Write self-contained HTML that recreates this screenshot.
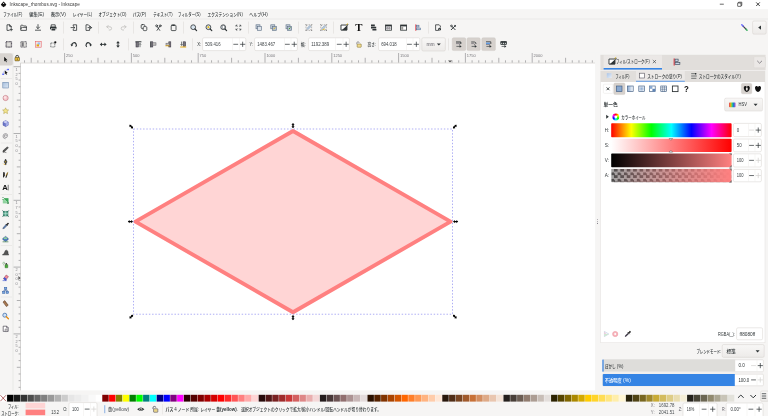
<!DOCTYPE html>
<html lang="ja"><head><meta charset="utf-8"><title>Inkscape_rhombus.svg - Inkscape</title>
<style>
html,body{margin:0;padding:0;width:768px;height:416px;overflow:hidden;background:#f6f5f4}
#r{filter:blur(0.8px);position:absolute;left:0;top:0;width:1920px;height:1040px;transform:scale(.4);transform-origin:0 0;background:#f6f5f4;overflow:hidden;font-family:"Liberation Sans","Noto Sans CJK JP",sans-serif;font-size:12px;font-weight:500;color:#2e3436}
#r div,#r span,#r svg{position:absolute;box-sizing:border-box}
#r svg{overflow:visible}
.t{white-space:nowrap;line-height:20px;height:20px;transform-origin:0 50%}
.t i{font-style:normal;font-size:1.18em}
.sp{background:#fff;border:1px solid #cdc7c2;border-radius:4px}
.bt{background:linear-gradient(#f8f7f6,#edebe9);border:1px solid #cdc7c2;border-radius:4px}
.tg{background:#d6d1cd;border:1px solid #cdc7c2;border-radius:4px}
</style></head><body><div id="r">
<div style="left:0.0px;top:0.0px;width:1920.0px;height:23.0px;background:#ffffff;"></div>
<span class="t" style="left:23.5px;top:2.38px;font-size:12px;color:#3c3c3c;transform:scaleX(0.964);">Inkscape_rhombus.svg - Inkscape</span>
<svg style="left:0.75px;top:3.0px;" width="16" height="16" viewBox="0 0 16 16"><path d="M8 1 L15 8 L12.5 10.5 L14 12 L11 12.5 L8 15 L5 12.5 L2 12 L3.5 10.5 L1 8 Z" fill="#111"/><path d="M6 6 L8 4 L10 6 L8 7Z" fill="#fff"/></svg>
<svg style="left:1790.0px;top:-1px" width="130" height="23" viewBox="0 0 130 23"><path d="M9.500 11.500h10" stroke="#000" stroke-width="1.500"/><rect x="54.500" y="8.500" width="8" height="8" fill="none" stroke="#000" stroke-width="1.400"/><path d="M56.500 8.500v-2h8v8h-2" fill="none" stroke="#000" stroke-width="1.400"/><path d="M100.500 7l9 9M109.500 7l-9 9" stroke="#000" stroke-width="1.800"/></svg>
<span class="t" style="left:7.75px;top:25.25px;font-size:12px;color:#2e3436;transform:scaleX(0.725);">ファイル<i>(F)</i></span>
<span class="t" style="left:72.5px;top:25.25px;font-size:12px;color:#2e3436;transform:scaleX(0.872);">編集<i>(E)</i></span>
<span class="t" style="left:126.5px;top:25.25px;font-size:12px;color:#2e3436;transform:scaleX(0.889);">表示<i>(V)</i></span>
<span class="t" style="left:181.88px;top:25.25px;font-size:12px;color:#2e3436;transform:scaleX(0.746);">レイヤー<i>(L)</i></span>
<span class="t" style="left:245.62px;top:25.25px;font-size:12px;color:#2e3436;transform:scaleX(0.761);">オブジェクト<i>(O)</i></span>
<span class="t" style="left:331.88px;top:25.25px;font-size:12px;color:#2e3436;transform:scaleX(0.785);">パス<i>(P)</i></span>
<span class="t" style="left:382.5px;top:25.25px;font-size:12px;color:#2e3436;transform:scaleX(0.739);">テキスト<i>(T)</i></span>
<span class="t" style="left:445.0px;top:25.25px;font-size:12px;color:#2e3436;transform:scaleX(0.720);">フィルター<i>(S)</i></span>
<span class="t" style="left:518.75px;top:25.25px;font-size:12px;color:#2e3436;transform:scaleX(0.766);">エクステンション<i>(N)</i></span>
<span class="t" style="left:622.5px;top:25.25px;font-size:12px;color:#2e3436;transform:scaleX(0.837);">ヘルプ<i>(H)</i></span>
<div style="left:0.0px;top:46.5px;width:1920.0px;height:1.0px;background:#dcd8d4;"></div>
<div style="left:51.5px;top:158.25px;width:1436.0px;height:817.5px;background:#ffffff;"></div>
<div style="left:33.5px;top:132.0px;width:1454.0px;height:26.25px;background:#f6f5f4;"></div>
<div style="left:33.5px;top:156.5px;width:1454.0px;height:1.75px;background:#bdbab6;"></div>
<div style="left:33.5px;top:132.0px;width:18.0px;height:843.75px;background:#f6f5f4;"></div>
<div style="left:50.5px;top:156.5px;width:1.5px;height:819.25px;background:#a5a3a0;"></div>
<div style="left:31.5px;top:132.0px;width:1.0px;height:843.75px;background:#d8d4d0;"></div>
<span class="t" style="left:165.0px;top:129.5px;font-size:10px;color:#77767b;">250</span>
<span class="t" style="left:332.0px;top:129.5px;font-size:10px;color:#77767b;">500</span>
<span class="t" style="left:499.0px;top:129.5px;font-size:10px;color:#77767b;">750</span>
<span class="t" style="left:666.0px;top:129.5px;font-size:10px;color:#77767b;">1000</span>
<span class="t" style="left:833.0px;top:129.5px;font-size:10px;color:#77767b;">1250</span>
<span class="t" style="left:1000.0px;top:129.5px;font-size:10px;color:#77767b;">1500</span>
<span class="t" style="left:1167.0px;top:129.5px;font-size:10px;color:#77767b;">1750</span>
<span class="t" style="left:1334.0px;top:129.5px;font-size:10px;color:#77767b;">2000</span>
<span class="t" style="left:38.75px;top:164.0px;font-size:9.5px;color:#858489;">1</span>
<span class="t" style="left:38.75px;top:175.5px;font-size:9.5px;color:#858489;">2</span>
<span class="t" style="left:38.75px;top:187.0px;font-size:9.5px;color:#858489;">5</span>
<span class="t" style="left:38.75px;top:198.5px;font-size:9.5px;color:#858489;">0</span>
<span class="t" style="left:38.75px;top:331.0px;font-size:9.5px;color:#858489;">1</span>
<span class="t" style="left:38.75px;top:342.5px;font-size:9.5px;color:#858489;">5</span>
<span class="t" style="left:38.75px;top:354.0px;font-size:9.5px;color:#858489;">0</span>
<span class="t" style="left:38.75px;top:365.5px;font-size:9.5px;color:#858489;">0</span>
<span class="t" style="left:38.75px;top:498.0px;font-size:9.5px;color:#858489;">1</span>
<span class="t" style="left:38.75px;top:509.5px;font-size:9.5px;color:#858489;">7</span>
<span class="t" style="left:38.75px;top:521.0px;font-size:9.5px;color:#858489;">5</span>
<span class="t" style="left:38.75px;top:532.5px;font-size:9.5px;color:#858489;">0</span>
<span class="t" style="left:38.75px;top:665.0px;font-size:9.5px;color:#858489;">2</span>
<span class="t" style="left:38.75px;top:676.5px;font-size:9.5px;color:#858489;">0</span>
<span class="t" style="left:38.75px;top:688.0px;font-size:9.5px;color:#858489;">0</span>
<span class="t" style="left:38.75px;top:699.5px;font-size:9.5px;color:#858489;">0</span>
<span class="t" style="left:38.75px;top:832.0px;font-size:9.5px;color:#858489;">2</span>
<span class="t" style="left:38.75px;top:843.5px;font-size:9.5px;color:#858489;">2</span>
<span class="t" style="left:38.75px;top:855.0px;font-size:9.5px;color:#858489;">5</span>
<span class="t" style="left:38.75px;top:866.5px;font-size:9.5px;color:#858489;">0</span>
<svg style="left:0;top:0" width="1920" height="1040" viewBox="0 0 1920 1040" stroke="#6b6a6f" stroke-width="1.25" fill="none"><path d="M61.3 150.75V156.5"/><path d="M78.0 144.5V156.5"/><path d="M94.7 150.75V156.5"/><path d="M111.4 150.75V156.5"/><path d="M128.1 150.75V156.5"/><path d="M144.8 150.75V156.5"/><path d="M161.5 132.5V156.5"/><path d="M178.2 150.75V156.5"/><path d="M194.9 150.75V156.5"/><path d="M211.6 150.75V156.5"/><path d="M228.3 150.75V156.5"/><path d="M245.0 144.5V156.5"/><path d="M261.7 150.75V156.5"/><path d="M278.4 150.75V156.5"/><path d="M295.1 150.75V156.5"/><path d="M311.8 150.75V156.5"/><path d="M328.5 132.5V156.5"/><path d="M345.2 150.75V156.5"/><path d="M361.9 150.75V156.5"/><path d="M378.6 150.75V156.5"/><path d="M395.3 150.75V156.5"/><path d="M412.0 144.5V156.5"/><path d="M428.7 150.75V156.5"/><path d="M445.4 150.75V156.5"/><path d="M462.1 150.75V156.5"/><path d="M478.8 150.75V156.5"/><path d="M495.5 132.5V156.5"/><path d="M512.2 150.75V156.5"/><path d="M528.9 150.75V156.5"/><path d="M545.6 150.75V156.5"/><path d="M562.3 150.75V156.5"/><path d="M579.0 144.5V156.5"/><path d="M595.7 150.75V156.5"/><path d="M612.4 150.75V156.5"/><path d="M629.1 150.75V156.5"/><path d="M645.8 150.75V156.5"/><path d="M662.5 132.5V156.5"/><path d="M679.2 150.75V156.5"/><path d="M695.9 150.75V156.5"/><path d="M712.6 150.75V156.5"/><path d="M729.3 150.75V156.5"/><path d="M746.0 144.5V156.5"/><path d="M762.7 150.75V156.5"/><path d="M779.4 150.75V156.5"/><path d="M796.1 150.75V156.5"/><path d="M812.8 150.75V156.5"/><path d="M829.5 132.5V156.5"/><path d="M846.2 150.75V156.5"/><path d="M862.9 150.75V156.5"/><path d="M879.6 150.75V156.5"/><path d="M896.3 150.75V156.5"/><path d="M913.0 144.5V156.5"/><path d="M929.7 150.75V156.5"/><path d="M946.4 150.75V156.5"/><path d="M963.1 150.75V156.5"/><path d="M979.8 150.75V156.5"/><path d="M996.5 132.5V156.5"/><path d="M1013.2 150.75V156.5"/><path d="M1029.9 150.75V156.5"/><path d="M1046.6 150.75V156.5"/><path d="M1063.3 150.75V156.5"/><path d="M1080.0 144.5V156.5"/><path d="M1096.7 150.75V156.5"/><path d="M1113.4 150.75V156.5"/><path d="M1130.1 150.75V156.5"/><path d="M1146.8 150.75V156.5"/><path d="M1163.5 132.5V156.5"/><path d="M1180.2 150.75V156.5"/><path d="M1196.9 150.75V156.5"/><path d="M1213.6 150.75V156.5"/><path d="M1230.3 150.75V156.5"/><path d="M1247.0 144.5V156.5"/><path d="M1263.7 150.75V156.5"/><path d="M1280.4 150.75V156.5"/><path d="M1297.1 150.75V156.5"/><path d="M1313.8 150.75V156.5"/><path d="M1330.5 132.5V156.5"/><path d="M1347.2 150.75V156.5"/><path d="M1363.9 150.75V156.5"/><path d="M1380.6 150.75V156.5"/><path d="M1397.3 150.75V156.5"/><path d="M1414.0 144.5V156.5"/><path d="M1430.7 150.75V156.5"/><path d="M1447.4 150.75V156.5"/><path d="M1464.1 150.75V156.5"/><path d="M1480.8 150.75V156.5"/><path d="M34.0 166.75H51.0"/><path d="M46.5 183.45H51.0"/><path d="M46.5 200.15H51.0"/><path d="M46.5 216.85H51.0"/><path d="M46.5 233.55H51.0"/><path d="M42.0 250.25H51.0"/><path d="M46.5 266.95H51.0"/><path d="M46.5 283.65H51.0"/><path d="M46.5 300.35H51.0"/><path d="M46.5 317.05H51.0"/><path d="M34.0 333.75H51.0"/><path d="M46.5 350.45H51.0"/><path d="M46.5 367.15H51.0"/><path d="M46.5 383.85H51.0"/><path d="M46.5 400.55H51.0"/><path d="M42.0 417.25H51.0"/><path d="M46.5 433.95H51.0"/><path d="M46.5 450.65H51.0"/><path d="M46.5 467.35H51.0"/><path d="M46.5 484.05H51.0"/><path d="M34.0 500.75H51.0"/><path d="M46.5 517.45H51.0"/><path d="M46.5 534.15H51.0"/><path d="M46.5 550.85H51.0"/><path d="M46.5 567.55H51.0"/><path d="M42.0 584.25H51.0"/><path d="M46.5 600.95H51.0"/><path d="M46.5 617.65H51.0"/><path d="M46.5 634.35H51.0"/><path d="M46.5 651.05H51.0"/><path d="M34.0 667.75H51.0"/><path d="M46.5 684.45H51.0"/><path d="M46.5 701.15H51.0"/><path d="M46.5 717.85H51.0"/><path d="M46.5 734.55H51.0"/><path d="M42.0 751.25H51.0"/><path d="M46.5 767.95H51.0"/><path d="M46.5 784.65H51.0"/><path d="M46.5 801.35H51.0"/><path d="M46.5 818.05H51.0"/><path d="M34.0 834.75H51.0"/><path d="M46.5 851.45H51.0"/><path d="M46.5 868.15H51.0"/><path d="M46.5 884.85H51.0"/><path d="M46.5 901.55H51.0"/><path d="M42.0 918.25H51.0"/><path d="M46.5 934.95H51.0"/><path d="M46.5 951.65H51.0"/><path d="M46.5 968.35H51.0"/></svg>
<svg style="left:0;top:0" width="1920" height="1040" viewBox="0 0 1920 1040"><path d="M1120.0 151.0h10l-5 5.500z" fill="#555"/><path d="M46.0 689.75v10l5.500-5z" fill="#555"/></svg>
<svg style="left:0;top:0" width="1920" height="1040" viewBox="0 0 1920 1040"><path d="M732.5 327.38 L1126.38 554.05 L732.5 780.75 L338.62 554.05Z" fill="#ffd5d5" stroke="#ff8080" stroke-width="9.75" stroke-linejoin="round"/><rect x="333.75" y="322.5" width="797.5" height="463.12" fill="none" stroke="#a3a3f4" stroke-width="2.2" stroke-dasharray="3.6 4.4"/><g transform="translate(328.0 316.5) rotate(45)"><path d="M-6.500 0L-2 -4V-1.700H2V-4L6.500 0L2 4V1.700H-2V4Z" fill="#000"/></g><g transform="translate(1137.0 316.5) rotate(-45)"><path d="M-6.500 0L-2 -4V-1.700H2V-4L6.500 0L2 4V1.700H-2V4Z" fill="#000"/></g><g transform="translate(328.25 791.5) rotate(-45)"><path d="M-6.500 0L-2 -4V-1.700H2V-4L6.500 0L2 4V1.700H-2V4Z" fill="#000"/></g><g transform="translate(1137.0 791.5) rotate(45)"><path d="M-6.500 0L-2 -4V-1.700H2V-4L6.500 0L2 4V1.700H-2V4Z" fill="#000"/></g><g transform="translate(732.5 314.0) rotate(90)"><path d="M-6.500 0L-2 -4V-1.700H2V-4L6.500 0L2 4V1.700H-2V4Z" fill="#000"/></g><g transform="translate(732.5 794.0) rotate(90)"><path d="M-6.500 0L-2 -4V-1.700H2V-4L6.500 0L2 4V1.700H-2V4Z" fill="#000"/></g><g transform="translate(326.0 554.05) rotate(0)"><path d="M-6.500 0L-2 -4V-1.700H2V-4L6.500 0L2 4V1.700H-2V4Z" fill="#000"/></g><g transform="translate(1139.0 554.05) rotate(0)"><path d="M-6.500 0L-2 -4V-1.700H2V-4L6.500 0L2 4V1.700H-2V4Z" fill="#000"/></g></svg>
<div style="left:1487.5px;top:132.0px;width:13.5px;height:845.5px;background:#f6f5f4;"></div>
<div style="left:1492.88px;top:547.62px;width:2.25px;height:2.25px;background:#3d3846;border-radius:50%"></div>
<div style="left:1492.88px;top:552.5px;width:2.25px;height:2.25px;background:#3d3846;border-radius:50%"></div>
<div style="left:1492.88px;top:557.38px;width:2.25px;height:2.25px;background:#3d3846;border-radius:50%"></div>
<div style="left:158.88px;top:53.75px;width:1.0px;height:30.0px;background:#d5d0cc;"></div>
<div style="left:245.25px;top:53.75px;width:1.0px;height:30.0px;background:#d5d0cc;"></div>
<div style="left:333.25px;top:53.75px;width:1.0px;height:30.0px;background:#d5d0cc;"></div>
<div style="left:458.25px;top:53.75px;width:1.0px;height:30.0px;background:#d5d0cc;"></div>
<div style="left:620.5px;top:53.75px;width:1.0px;height:30.0px;background:#d5d0cc;"></div>
<div style="left:745.75px;top:53.75px;width:1.0px;height:30.0px;background:#d5d0cc;"></div>
<div style="left:833.25px;top:53.75px;width:1.0px;height:30.0px;background:#d5d0cc;"></div>
<div style="left:1070.5px;top:53.75px;width:1.0px;height:30.0px;background:#d5d0cc;"></div>
<div style="left:158.88px;top:96.25px;width:1.0px;height:30.0px;background:#d5d0cc;"></div>
<div style="left:321.38px;top:96.25px;width:1.0px;height:30.0px;background:#d5d0cc;"></div>
<div style="left:481.38px;top:96.25px;width:1.0px;height:30.0px;background:#d5d0cc;"></div>
<div style="left:1121.0px;top:96.25px;width:1.0px;height:30.0px;background:#d5d0cc;"></div>
<svg style="left:12.5px;top:59.0px;" width="20" height="20" viewBox="0 0 20 20"><path d="M10 17H4.500V3H11L15 7V10" fill="none" stroke="#2e3436" stroke-width="2" stroke-linejoin="round" stroke-linecap="round"/><path d="M11 3V7H15" fill="none" stroke="#2e3436" stroke-width="2" stroke-linejoin="round" stroke-linecap="round"/><path d="M15 12v6M12 15h6" fill="none" stroke="#2e3436" stroke-width="2" stroke-linejoin="round" stroke-linecap="round"/></svg>
<svg style="left:48.75px;top:59.0px;" width="20" height="20" viewBox="0 0 20 20"><path d="M3 16V5.500Q3 4 4.500 4H8L10 6H15.500Q17 6 17 7.500V16Z" fill="none" stroke="#2e3436" stroke-width="2" stroke-linejoin="round" stroke-linecap="round"/><path d="M3 13Q3 9.500 7 9.500H17" fill="none" stroke="#2e3436" stroke-width="2" stroke-linejoin="round" stroke-linecap="round"/></svg>
<svg style="left:85.0px;top:59.0px;" width="20" height="20" viewBox="0 0 20 20"><path d="M10 2.500V12M6 8.500L10 12.500L14 8.500M3.500 16.500H16.500" fill="none" stroke="#2e3436" stroke-width="2" stroke-linejoin="round" stroke-linecap="round"/></svg>
<svg style="left:122.5px;top:59.0px;" width="20" height="20" viewBox="0 0 20 20"><path d="M5 7V3H15V7" fill="none" stroke="#2e3436" stroke-width="2" stroke-linejoin="round" stroke-linecap="round"/><rect x="2" y="7" width="16" height="8" rx="2" fill="#2e3436"/><rect x="5" y="12" width="10" height="6" fill="#2e3436" stroke="#f6f5f4" stroke-width="1"/></svg>
<svg style="left:175.0px;top:59.0px;" width="20" height="20" viewBox="0 0 20 20"><path d="M8 5V3H16.500V17H8V15" fill="none" stroke="#2e3436" stroke-width="2" stroke-linejoin="round" stroke-linecap="round"/><path d="M2.500 10H11.500M8.500 6.500L12 10L8.500 13.500" fill="none" stroke="#2e3436" stroke-width="2" stroke-linejoin="round" stroke-linecap="round"/></svg>
<svg style="left:211.25px;top:59.0px;" width="20" height="20" viewBox="0 0 20 20"><path d="M13 12.500V17H4V3H10L13 6V7.500" fill="none" stroke="#2e3436" stroke-width="2" stroke-linejoin="round" stroke-linecap="round"/><path d="M9 10H17.500M14.500 6.500L18 10L14.500 13.500" fill="none" stroke="#2e3436" stroke-width="2" stroke-linejoin="round" stroke-linecap="round"/></svg>
<svg style="left:262.5px;top:59.0px;" width="20" height="20" viewBox="0 0 20 20"><path d="M4 8H12Q16 8 16 12T12 16H10M7.500 4.500L4 8L7.500 11.500" fill="none" stroke="#c0bfbc" stroke-width="2" stroke-linejoin="round" stroke-linecap="round"/></svg>
<svg style="left:298.75px;top:59.0px;" width="20" height="20" viewBox="0 0 20 20"><path d="M16 8H8Q4 8 4 12T8 16H10M12.500 4.500L16 8L12.500 11.500" fill="none" stroke="#c0bfbc" stroke-width="2" stroke-linejoin="round" stroke-linecap="round"/></svg>
<svg style="left:350.0px;top:59.0px;" width="20" height="20" viewBox="0 0 20 20"><rect x="3" y="2.500" width="9" height="10" rx="2.500" fill="none" stroke="#2e3436" stroke-width="2" stroke-linejoin="round" stroke-linecap="round"/><rect x="8" y="7.500" width="9" height="10" rx="2.500" fill="#f6f5f4" stroke="#2e3436" stroke-width="2"/></svg>
<svg style="left:386.25px;top:59.0px;" width="20" height="20" viewBox="0 0 20 20"><circle cx="5.500" cy="5.500" r="2.300" fill="none" stroke="#2e3436" stroke-width="2" stroke-linejoin="round" stroke-linecap="round"/><circle cx="14.500" cy="5.500" r="2.300" fill="none" stroke="#2e3436" stroke-width="2" stroke-linejoin="round" stroke-linecap="round"/><path d="M7 7.500L13.500 17M13 7.500L6.500 17" fill="none" stroke="#2e3436" stroke-width="2" stroke-linejoin="round" stroke-linecap="round"/></svg>
<svg style="left:423.75px;top:59.0px;" width="20" height="20" viewBox="0 0 20 20"><rect x="4" y="4" width="12" height="13.500" rx="2" fill="none" stroke="#2e3436" stroke-width="2" stroke-linejoin="round" stroke-linecap="round"/><rect x="7" y="2" width="6" height="4" rx="1" fill="#2e3436"/></svg>
<svg style="left:474.38px;top:59.0px;" width="20" height="20" viewBox="0 0 20 20"><circle cx="9" cy="9" r="6" fill="#d8e4ee" stroke="#2e3436" stroke-width="2"/><path d="M13.500 13.500L17.500 17.500" stroke="#2e3436" stroke-width="3" stroke-linecap="round"/></svg>
<svg style="left:511.5px;top:59.0px;" width="20" height="20" viewBox="0 0 20 20"><circle cx="9" cy="9" r="6" fill="#d8e4ee" stroke="#2e3436" stroke-width="2"/><path d="M6 8L10 6L12 10L8 12Z" fill="#e9b913"/><path d="M13.500 13.500L17.500 17.500" stroke="#2e3436" stroke-width="3" stroke-linecap="round"/></svg>
<svg style="left:549.0px;top:59.0px;" width="20" height="20" viewBox="0 0 20 20"><circle cx="9" cy="9" r="6" fill="#d8e4ee" stroke="#2e3436" stroke-width="2"/><rect x="7" y="5.500" width="4.500" height="7" fill="#fff" stroke="#555"/><path d="M13.500 13.500L17.500 17.500" stroke="#2e3436" stroke-width="3" stroke-linecap="round"/></svg>
<svg style="left:586.0px;top:59.0px;" width="20" height="20" viewBox="0 0 20 20"><path d="M4 7.500V4H7.500M12.500 4H16V7.500M16 12.500V16H12.500M7.500 16H4V12.500" fill="none" stroke="#2e3436" stroke-width="1.700"/><path d="M4 4L8 8M16 4L12 8M4 16L8 12M16 16L12 12" stroke="#2e3436" stroke-width="1.300"/></svg>
<svg style="left:636.5px;top:59.0px;" width="20" height="20" viewBox="0 0 20 20"><rect x="3" y="3" width="10" height="10" fill="#c3ccd6" stroke="#5d6f85" stroke-width="1.500"/><rect x="7" y="7" width="10" height="10" fill="#dde3ea" stroke="#5d6f85" stroke-width="1.500"/></svg>
<svg style="left:674.0px;top:59.0px;" width="20" height="20" viewBox="0 0 20 20"><rect x="3" y="3" width="10" height="10" fill="#c3ccd6" stroke="#5d6f85" stroke-width="1.500"/><rect x="7" y="7" width="10" height="10" fill="#b3c0ce" stroke="#5d6f85" stroke-width="1.500"/><path d="M10 14L14 10" stroke="#e9b913" stroke-width="2.500"/></svg>
<svg style="left:711.5px;top:59.0px;" width="20" height="20" viewBox="0 0 20 20"><rect x="3" y="3" width="10" height="10" fill="#c3ccd6" stroke="#5d6f85" stroke-width="1.500"/><rect x="7" y="7" width="10" height="10" fill="#b3c0ce" stroke="#5d6f85" stroke-width="1.500"/><path d="M10 14L14 10" stroke="#4c9a2a" stroke-width="2.500"/></svg>
<svg style="left:762.25px;top:59.0px;" width="20" height="20" viewBox="0 0 20 20"><rect x="3" y="3" width="14" height="14" fill="none" stroke="#555" stroke-width="1.200" stroke-dasharray="2 2"/><path d="M5 12L12 5L15 8L8 15Z" fill="#b5c9dd" stroke="#6d8bad"/><path d="M2 2l3 3M18 2l-3 3M2 18l3-3M18 18l-3-3" stroke="#333" stroke-width="1.500"/></svg>
<svg style="left:798.75px;top:59.0px;" width="20" height="20" viewBox="0 0 20 20"><rect x="3" y="3" width="14" height="14" fill="none" stroke="#555" stroke-width="1.200" stroke-dasharray="2 2"/><path d="M5 12L12 5L15 8L8 15Z" fill="#b5c9dd" stroke="#6d8bad"/><path d="M6 14L14 12L11 16Z" fill="#e9b913"/><path d="M2 2l3 3M18 2l-3 3M2 18l3-3M18 18l-3-3" stroke="#333" stroke-width="1.500"/></svg>
<svg style="left:848.5px;top:57.5px;" width="23" height="23" viewBox="0 0 20 20"><path d="M3 4H15L17 2L18 3L16 6V15H3Z" fill="#fff" stroke="#2e3436" stroke-width="2" stroke-linejoin="round"/><path d="M4 16L16 5V15.500H4Z" fill="#2e3436"/><path d="M15 3l3-2" stroke="#e9b913" stroke-width="2"/></svg>
<svg style="left:886.5px;top:59.0px;" width="20" height="20" viewBox="0 0 20 20"><text x="10" y="19.500" font-family="Liberation Serif,serif" font-weight="bold" font-size="27" text-anchor="middle" fill="#111">T</text></svg>
<svg style="left:923.75px;top:59.0px;" width="20" height="20" viewBox="0 0 20 20"><path d="M3.500 4.500H13M3.500 10H16.500M7 15.500H17" stroke="#2e3436" stroke-width="3.900"/></svg>
<svg style="left:961.25px;top:59.0px;" width="20" height="20" viewBox="0 0 20 20"><rect x="2.500" y="3.500" width="15" height="13" fill="#fff" stroke="#2e3436" stroke-width="2"/><rect x="2.500" y="3.500" width="15" height="3.500" fill="#2e3436"/><path d="M5.500 9.500H9V13.500H5.500ZM11 9.500H14.500V13.500H11Z" fill="#deddda" stroke="#3d3846"/></svg>
<svg style="left:998.5px;top:59.0px;" width="20" height="20" viewBox="0 0 20 20"><rect x="2.500" y="3.500" width="15" height="13" fill="#fff" stroke="#2e3436" stroke-width="2"/><rect x="2.500" y="3.500" width="15" height="3.500" fill="#2e3436"/><rect x="4" y="8" width="5" height="7.500" fill="#9a9996"/></svg>
<svg style="left:1035.0px;top:59.0px;" width="20" height="20" viewBox="0 0 20 20"><path d="M4.500 2V18" stroke="#e01b24" stroke-width="2"/><rect x="6.500" y="4" width="6" height="4.500" fill="#c4d3e3" stroke="#46648a" stroke-width="1.300"/><rect x="6.500" y="11" width="10" height="4.500" fill="#c4d3e3" stroke="#46648a" stroke-width="1.300"/></svg>
<svg style="left:1085.25px;top:59.0px;" width="20" height="20" viewBox="0 0 20 20"><path d="M11 17H4V3H13L16 6V9" fill="none" stroke="#2e3436" stroke-width="2" stroke-linejoin="round" stroke-linecap="round"/><circle cx="14" cy="14" r="3.500" fill="#2e3436"/><circle cx="14" cy="14" r="1.200" fill="#f6f5f4"/></svg>
<svg style="left:1122.5px;top:59.0px;" width="20" height="20" viewBox="0 0 20 20"><g transform="translate(10 10) scale(.82) translate(-10 -10)"><path d="M3.500 4L16 16.500M16.500 4L4 16.500" stroke="#2e3436" stroke-width="2.800" stroke-linecap="round"/><circle cx="5" cy="5" r="2.800" fill="none" stroke="#2e3436" stroke-width="2"/><path d="M14 3l3.500 3.500" stroke="#2e3436" stroke-width="3.800"/></g></svg>
<svg style="left:11.5px;top:101.0px;" width="20" height="20" viewBox="0 0 20 20"><rect x="3" y="3" width="14" height="14" fill="#c0bfbc" stroke="#241f31" stroke-width="1.800" stroke-dasharray="2.500 1"/><rect x="6" y="6" width="8" height="8" fill="#deddda"/></svg>
<svg style="left:49.38px;top:101.0px;" width="20" height="20" viewBox="0 0 20 20"><rect x="3" y="3" width="14" height="14" fill="#c0bfbc" stroke="#5e5c64" stroke-width="1.800" stroke-dasharray="2.500 1"/><rect x="6" y="5" width="4" height="10" fill="#77767b"/><rect x="11" y="5" width="4" height="10" fill="#deddda"/></svg>
<svg style="left:86.25px;top:101.0px;" width="20" height="20" viewBox="0 0 20 20"><rect x="3" y="3" width="14" height="14" fill="#f1e4e4" stroke="#e8555c" stroke-width="1.300"/><circle cx="11" cy="8" r="3.200" fill="#99c1f1"/><rect x="5.500" y="10" width="6" height="5" fill="#e5a50a"/></svg>
<svg style="left:122.5px;top:101.0px;" width="20" height="20" viewBox="0 0 20 20"><rect x="4" y="6.500" width="10" height="10" fill="none" stroke="#2e3436" stroke-width="1.500" stroke-dasharray="3 1.200"/><circle cx="15.200" cy="4.800" r="2.800" fill="#111"/></svg>
<svg style="left:174.5px;top:101.0px;" width="20" height="20" viewBox="0 0 20 20"><path d="M4.500 13A5.800 5.800 0 1 1 14 16" fill="none" stroke="#2e3436" stroke-width="2.800"/><path d="M1 10.500L4.500 15.500L8 10.500Z" fill="#2e3436"/></svg>
<svg style="left:210.5px;top:101.0px;" width="20" height="20" viewBox="0 0 20 20"><path d="M15.500 13A5.800 5.800 0 1 0 6 16" fill="none" stroke="#2e3436" stroke-width="2.800"/><path d="M12 10.500L15.500 15.500L19 10.500Z" fill="#2e3436"/></svg>
<svg style="left:247.5px;top:101.0px;" width="20" height="20" viewBox="0 0 20 20"><path d="M5 10H15" stroke="#2e3436" stroke-width="2.400"/><path d="M1.500 10L7 5.500V14.500ZM18.500 10L13 5.500V14.500Z" fill="#2e3436"/></svg>
<svg style="left:285.0px;top:101.0px;" width="20" height="20" viewBox="0 0 20 20"><path d="M10 6V14" stroke="#2e3436" stroke-width="2.400"/><path d="M10 1.500L14.500 7H5.500ZM10 18.500L14.500 13H5.500Z" fill="#2e3436"/></svg>
<svg style="left:335.75px;top:101.0px;" width="20" height="20" viewBox="0 0 20 20"><path d="M2.500 3.500H17.500" stroke="#2e3436" stroke-width="2.600"/><rect x="4" y="5.500" width="6" height="11" fill="#77767b" stroke="#3d3846" stroke-width="1.400"/><path d="M14 17V8M11.500 10.500L14 7.500L16.500 10.500" stroke="#2e3436" stroke-width="1.600" fill="none"/></svg>
<svg style="left:373.25px;top:101.0px;" width="20" height="20" viewBox="0 0 20 20"><rect x="4" y="3.500" width="5" height="13" fill="#77767b" stroke="#3d3846" stroke-width="1.400"/><rect x="9" y="6" width="8" height="6" fill="#c0bfbc" stroke="#5e5c64" stroke-width="1.300"/><path d="M3.500 2.500V17.500" stroke="#2e3436" stroke-width="1.600"/></svg>
<svg style="left:410.75px;top:101.0px;" width="20" height="20" viewBox="0 0 20 20"><rect x="11" y="3.500" width="5" height="13" fill="#77767b" stroke="#3d3846" stroke-width="1.400"/><rect x="4" y="7" width="8" height="6" fill="#c0bfbc" stroke="#5e5c64" stroke-width="1.300"/><path d="M2.500 13.500H13" stroke="#e5a50a" stroke-width="2"/></svg>
<svg style="left:447.5px;top:101.0px;" width="20" height="20" viewBox="0 0 20 20"><rect x="10" y="3.500" width="6" height="11" fill="#77767b" stroke="#3d3846" stroke-width="1.400"/><path d="M6 3V12M3.500 9.500L6 12.500L8.500 9.500" stroke="#2e3436" stroke-width="1.600" fill="none"/><path d="M2.500 16.500H17.500" stroke="#e5a50a" stroke-width="2.400"/></svg>
<span class="t" style="left:492.5px;top:101.0px;font-size:12px;color:#2e3436;transform:scaleX(0.909);">X:</span>
<div class="sp" style="left:506.25px;top:94.25px;width:109.0px;height:33.0px"></div>
<div style="left:580.5px;top:95.25px;width:0.5px;height:31.0px;background:#ebe8e5;"></div>
<div style="left:597.75px;top:95.25px;width:0.5px;height:31.0px;background:#ebe8e5;"></div>
<svg style="left:0;top:0" width="1920" height="1040" viewBox="0 0 1920 1040"><path d="M583.38 110.75h12" stroke="#2e3436" stroke-width="1.800"/><path d="M600.12 110.75h13M606.62 104.25v13" stroke="#2e3436" stroke-width="1.800"/></svg>
<span class="t" style="left:513.25px;top:100.75px;font-size:13px;color:#3a3f42;transform:scaleX(0.819);">509.416</span>
<span class="t" style="left:624.0px;top:101.0px;font-size:12px;color:#2e3436;transform:scaleX(0.818);">Y:</span>
<div class="sp" style="left:635.5px;top:94.25px;width:108.75px;height:33.0px"></div>
<div style="left:709.5px;top:95.25px;width:0.5px;height:31.0px;background:#ebe8e5;"></div>
<div style="left:726.75px;top:95.25px;width:0.5px;height:31.0px;background:#ebe8e5;"></div>
<svg style="left:0;top:0" width="1920" height="1040" viewBox="0 0 1920 1040"><path d="M712.38 110.75h12" stroke="#2e3436" stroke-width="1.800"/><path d="M729.12 110.75h13M735.62 104.25v13" stroke="#2e3436" stroke-width="1.800"/></svg>
<span class="t" style="left:642.5px;top:100.75px;font-size:13px;color:#3a3f42;transform:scaleX(0.829);">1483.467</span>
<span class="t" style="left:752.0px;top:101.0px;font-size:12px;color:#2e3436;transform:scaleX(0.781);">幅<i>:</i></span>
<div class="sp" style="left:770.5px;top:94.25px;width:103.5px;height:33.0px"></div>
<div style="left:839.25px;top:95.25px;width:0.5px;height:31.0px;background:#ebe8e5;"></div>
<div style="left:856.5px;top:95.25px;width:0.5px;height:31.0px;background:#ebe8e5;"></div>
<svg style="left:0;top:0" width="1920" height="1040" viewBox="0 0 1920 1040"><path d="M842.12 110.75h12" stroke="#2e3436" stroke-width="1.800"/><path d="M858.88 110.75h13M865.38 104.25v13" stroke="#2e3436" stroke-width="1.800"/></svg>
<span class="t" style="left:777.5px;top:100.75px;font-size:13px;color:#3a3f42;transform:scaleX(0.844);">1192.389</span>
<span class="t" style="left:919.0px;top:101.0px;font-size:12px;color:#2e3436;transform:scaleX(0.768);">高さ<i>:</i></span>
<div class="sp" style="left:945.75px;top:94.25px;width:103.75px;height:33.0px"></div>
<div style="left:1014.75px;top:95.25px;width:0.5px;height:31.0px;background:#ebe8e5;"></div>
<div style="left:1032.0px;top:95.25px;width:0.5px;height:31.0px;background:#ebe8e5;"></div>
<svg style="left:0;top:0" width="1920" height="1040" viewBox="0 0 1920 1040"><path d="M1017.63 110.75h12" stroke="#2e3436" stroke-width="1.800"/><path d="M1034.38 110.75h13M1040.88 104.25v13" stroke="#2e3436" stroke-width="1.800"/></svg>
<span class="t" style="left:952.75px;top:100.75px;font-size:13px;color:#3a3f42;transform:scaleX(0.825);">694.018</span>
<svg style="left:887.0px;top:101.0px;" width="20" height="20" viewBox="0 0 20 20"><path d="M5 9.500V6.500Q5 3.500 8 3.500T11 6" fill="none" stroke="#77767b" stroke-width="1.800"/><rect x="6" y="9" width="10" height="8" rx="1" fill="#ecd27a" stroke="#6b5a1e" stroke-width="1.200"/><path d="M7 12H15M7 14.500H15" stroke="#fbefc0" stroke-width="1"/></svg>
<div class="bt" style="left:1054.0px;top:93.75px;width:60.0px;height:34.0px"></div>
<span class="t" style="left:1065.5px;top:101.0px;font-size:12px;color:#5e5c64;transform:scaleX(1.025);">mm</span>
<svg style="left:1086.5px;top:101.25px;" width="20" height="20" viewBox="0 0 20 20"><path d="M5 7.500H15L10 13Z" fill="#2e3436"/></svg>
<div class="tg" style="left:1129.75px;top:94.25px;width:35.0px;height:33.0px"></div>
<div class="tg" style="left:1167.25px;top:94.25px;width:33.5px;height:33.0px"></div>
<div class="tg" style="left:1203.5px;top:94.25px;width:35.0px;height:33.0px"></div>
<svg style="left:1137.25px;top:101.0px;" width="20" height="20" viewBox="0 0 20 20"><path d="M3 4H15V9" fill="none" stroke="#2e3436" stroke-width="2.400"/><path d="M3 8H12V12" fill="none" stroke="#5e5c64" stroke-width="1.600"/><path d="M4 15H13" stroke="#2e3436" stroke-width="1.600"/><path d="M12 11.500L17 15L12 18.500Z" fill="#2e3436"/></svg>
<svg style="left:1174.5px;top:101.0px;" width="20" height="20" viewBox="0 0 20 20"><path d="M3 4H11Q15 4 15 9" fill="none" stroke="#2e3436" stroke-width="2"/><path d="M3 8H9Q12 8 12 12" fill="none" stroke="#5e5c64" stroke-width="1.600"/><path d="M4 15H13" stroke="#2e3436" stroke-width="1.600"/><path d="M12 11.500L17 15L12 18.500Z" fill="#2e3436"/></svg>
<svg style="left:1212.0px;top:101.0px;" width="20" height="20" viewBox="0 0 20 20"><path d="M3 3.500H15V9" fill="none" stroke="#2e3436" stroke-width="2"/><rect x="3" y="5.500" width="10" height="4" fill="#62a0ea"/><path d="M3 10H12V13" fill="none" stroke="#5e5c64" stroke-width="1.600"/><path d="M4 15H13" stroke="#2e3436" stroke-width="1.600"/><path d="M12 11.500L17 15L12 18.500Z" fill="#2e3436"/></svg>
<svg style="left:1248.75px;top:101.0px;" width="20" height="20" viewBox="0 0 20 20"><path d="M3 3H17V10H3ZM7.500 3V10M12.500 3V10" fill="none" stroke="#2e3436" stroke-width="2.200"/><path d="M3 4.500H17" stroke="#2e3436" stroke-width="3"/><path d="M5 15H13" stroke="#2e3436" stroke-width="1.600"/><path d="M12 11.500L17 15L12 18.500Z" fill="#2e3436"/></svg>
<svg style="left:1850.5px;top:58.75px;" width="20" height="20" viewBox="0 0 20 20"><path d="M5.500 5L14.500 14.500" stroke="#3d3846" stroke-width="3"/><path d="M3.500 3L6.500 6" stroke="#6c6cff" stroke-width="4" stroke-linecap="round"/><path d="M14 14L16.500 16.500" stroke="#3fae62" stroke-width="4" stroke-linecap="round"/></svg>
<div class="bt" style="left:1880.5px;top:52.0px;width:35.0px;height:33.5px"></div>
<svg style="left:1889.0px;top:59.0px;" width="20" height="20" viewBox="0 0 20 20"><path d="M13.500 4.500V15.500L6.500 10Z" fill="#2e3436"/></svg>
<div style="left:0;top:132.5px;width:31.5px;height:31.5px;background:#d8d4d0;border-radius:0 5px 5px 0"></div>
<svg style="left:4.0px;top:138.5px;" width="20" height="20" viewBox="0 0 20 20"><path d="M6.500 3V15L9.300 12.300L11.300 16.500L13 15.700L11 11.600H14.800Z" fill="#111"/></svg>
<svg style="left:4.0px;top:170.29px;" width="20" height="20" viewBox="0 0 20 20"><path d="M3 16Q5 5 16 4" fill="none" stroke="#5b6cff" stroke-width="1.300" stroke-dasharray="2 1.500"/><path d="M8 6V16L10.500 13.500L12.500 17L14 16.300L12 12.800H15.500Z" fill="#111"/><rect x="2" y="14" width="3.500" height="3.500" fill="#3a4bff"/><rect x="14.500" y="2" width="3.500" height="3.500" fill="#3a4bff"/></svg>
<svg style="left:4.0px;top:203.32px;" width="20" height="20" viewBox="0 0 20 20"><defs><linearGradient id="tr1" x1="0" y1="0" x2="1" y2="1"><stop offset="0" stop-color="#a8c0de"/><stop offset="1" stop-color="#dbe6f2"/></linearGradient></defs><rect x="3" y="3" width="14" height="14" fill="url(#tr1)" stroke="#5d7da6" stroke-width="1.300"/></svg>
<svg style="left:4.0px;top:235.11px;" width="20" height="20" viewBox="0 0 20 20"><circle cx="10" cy="10" r="6.500" fill="#f7c9ce" stroke="#b5606c" stroke-width="1.300"/><circle cx="8.500" cy="8.500" r="3" fill="#fbe3e6"/></svg>
<svg style="left:4.0px;top:266.89px;" width="20" height="20" viewBox="0 0 20 20"><path d="M10 2.500L12.300 7.500L17.500 8L13.700 11.700L14.800 17L10 14.300L5.200 17L6.300 11.700L2.500 8L7.700 7.500Z" fill="#f3e58f" stroke="#a8953a" stroke-width="1.200"/></svg>
<svg style="left:4.0px;top:298.68px;" width="20" height="20" viewBox="0 0 20 20"><path d="M10 2.500L16.500 6V14L10 17.500L3.500 14V6Z" fill="#6e78cc" stroke="#3c4799" stroke-width="1.100"/><path d="M3.500 6L10 9.500L16.500 6M10 9.500V17.500" fill="none" stroke="#3c4799" stroke-width="1"/><path d="M10 2.500L16.500 6L10 9.500L3.500 6Z" fill="#c9cdf3"/><path d="M10 9.500L16.500 6V14L10 17.500Z" fill="#a3aae6"/></svg>
<svg style="left:4.0px;top:330.46px;" width="20" height="20" viewBox="0 0 20 20"><path d="M10 10Q12 10 12 8.500T9.500 7T6.500 10T10 14T14.800 9.500T10 4T3.500 10T10 17" fill="none" stroke="#77767b" stroke-width="1.600"/></svg>
<svg style="left:4.0px;top:363.5px;" width="20" height="20" viewBox="0 0 20 20"><path d="M3 15L5 11L14.500 3L17 5.500L8 14.500Z" fill="#555" stroke="#222" stroke-width="1"/><path d="M3 15L4.300 12.300L6.800 14.300Z" fill="#222"/><path d="M3 17.500Q8 15.500 12 17.500" fill="none" stroke="#222" stroke-width="1.200"/></svg>
<svg style="left:4.0px;top:395.28px;" width="20" height="20" viewBox="0 0 20 20"><path d="M10 2.500L13.500 9.500Q13.500 12 11.300 13V16.500H8.700V13Q6.500 12 6.500 9.500Z" fill="#444" stroke="#111" stroke-width="1"/><circle cx="10" cy="9.500" r="1.300" fill="#f5c211"/><path d="M4 14Q6 17.500 9 16" fill="none" stroke="#e5a50a" stroke-width="1.500"/></svg>
<svg style="left:4.0px;top:427.06px;" width="20" height="20" viewBox="0 0 20 20"><path d="M4 3L8 4V12.500L5 17H3.500Z" fill="#222"/><path d="M9.500 17.500Q10 8 16.500 2.500Q15 10 12 17.500Z" fill="#222"/><path d="M11 12L15.500 4" stroke="#e5a50a" stroke-width="1.500"/></svg>
<svg style="left:4.0px;top:458.85px;" width="20" height="20" viewBox="0 0 20 20"><text x="8.500" y="17" font-family="Liberation Sans,sans-serif" font-weight="bold" font-size="19" text-anchor="middle" fill="#111">A</text><path d="M16.500 3V17" stroke="#111" stroke-width="1.400"/></svg>
<svg style="left:4.0px;top:491.89px;" width="20" height="20" viewBox="0 0 20 20"><rect x="3" y="3.500" width="14" height="13" fill="#8fd19e"/><path d="M3 3.500H17V16.500Z" fill="#3fa85a"/><path d="M4 4.500L16 15.500" stroke="#e8fbe8" stroke-width="1.500"/><rect x="2" y="2.500" width="3.500" height="3.500" fill="#fff" stroke="#2d7a42"/><rect x="14.500" y="14" width="3.500" height="3.500" fill="#fff" stroke="#2d7a42"/></svg>
<svg style="left:4.0px;top:523.67px;" width="20" height="20" viewBox="0 0 20 20"><rect x="4" y="4" width="12" height="12" fill="#5aa88f" stroke="#2a6b5a" stroke-width="1.200"/><path d="M4 10H16M10 4V16" stroke="#cfeee4" stroke-width="1.200"/><path d="M2 2l4 4M18 2l-4 4M2 18l4-4M18 18l-4-4" stroke="#2a6b5a" stroke-width="1.800"/></svg>
<svg style="left:4.0px;top:555.46px;" width="20" height="20" viewBox="0 0 20 20"><path d="M3 17L4 13.500L11 6.500L13.500 9L6.500 16Z" fill="#5a7fb5" stroke="#26364d" stroke-width="1"/><path d="M10.500 5L15 9.500M12 6.500L15.500 2.500Q17.500 2.500 17.500 4.500L13.500 8Z" fill="#222" stroke="#222" stroke-width="1.600"/></svg>
<svg style="left:4.0px;top:587.24px;" width="20" height="20" viewBox="0 0 20 20"><path d="M3 9L10 4L16.500 9V12L10 16.500L3 12Z" fill="#4d7fc4" stroke="#24446e" stroke-width="1.200"/><ellipse cx="9.500" cy="8.500" rx="4.500" ry="2.300" fill="#8fd19e"/><path d="M2.500 17.500H17" stroke="#3a7a4d" stroke-width="1.800"/></svg>
<svg style="left:4.0px;top:620.28px;" width="20" height="20" viewBox="0 0 20 20"><path d="M2.500 16.500Q6 16.500 7.500 10.500T12.500 5.500T16 10.500T17.500 16.500Z" fill="#555" stroke="#222" stroke-width="1"/><path d="M2 17H18" stroke="#222" stroke-width="1.400"/></svg>
<svg style="left:4.0px;top:652.06px;" width="20" height="20" viewBox="0 0 20 20"><rect x="8.500" y="9" width="7" height="8.500" rx="1" fill="#4caa3c" stroke="#1f5c16" stroke-width="1"/><rect x="10" y="6" width="3.500" height="3" fill="#222"/><path d="M3 3l1.500 1.500M6 2.500l1 2M2.500 6.500l2 .800M6.500 6L8 7.500M3.500 10l1.500 0" stroke="#2e7d32" stroke-width="1.500"/></svg>
<svg style="left:4.0px;top:683.85px;" width="20" height="20" viewBox="0 0 20 20"><path d="M4.500 13L11.500 3.500L17 7.500L10 17Z" fill="#f28b9b" stroke="#8c2f3f" stroke-width="1.200"/><path d="M4.500 13L7.300 9.200L12.800 13.200L10 17Z" fill="#3a57d6"/><path d="M2.500 17.500H13" stroke="#3a57d6" stroke-width="1.600"/></svg>
<svg style="left:4.0px;top:715.63px;" width="20" height="20" viewBox="0 0 20 20"><rect x="7" y="2.500" width="6" height="5" fill="#7aa7e0" stroke="#2e5aa0" stroke-width="1.200"/><rect x="2.500" y="12.500" width="6" height="5" fill="#7aa7e0" stroke="#2e5aa0" stroke-width="1.200"/><rect x="11.500" y="12.500" width="6" height="5" fill="#7aa7e0" stroke="#2e5aa0" stroke-width="1.200"/><path d="M10 7.500V10M5.500 12.500V10H14.500V12.500" fill="none" stroke="#2e5aa0" stroke-width="1.400"/></svg>
<svg style="left:4.0px;top:748.66px;" width="20" height="20" viewBox="0 0 20 20"><path d="M3.500 6L8 2.500L16.500 14L12 17.500Z" fill="#b5835a" stroke="#4d2f1a" stroke-width="1.300"/><path d="M6.500 6.500l2-1.500M8.500 9l2-1.500M10.500 11.500l2-1.500M12.500 14l2-1.500" stroke="#4d2f1a" stroke-width="1"/></svg>
<svg style="left:4.0px;top:780.45px;" width="20" height="20" viewBox="0 0 20 20"><circle cx="8" cy="8" r="5" fill="#cfe2f7" stroke="#3465a4" stroke-width="1.800"/><path d="M12 12L17 17" stroke="#e5890a" stroke-width="3.200" stroke-linecap="round"/></svg>
<svg style="left:4.0px;top:812.24px;" width="20" height="20" viewBox="0 0 20 20"><path d="M4 3.500H13L16.500 7V16.500H4Z" fill="#fff" stroke="#3d3846" stroke-width="1.600"/><path d="M12.500 3.500V7.500H16.500" fill="none" stroke="#3d3846" stroke-width="1.400"/><path d="M9 10.500H14V17H9Z" fill="#deddda" stroke="#3d3846" stroke-width="1"/></svg>
<div style="left:1.5px;top:196.41px;width:28.5px;height:0.75px;background:#dcd8d4;"></div>
<div style="left:1.5px;top:356.58px;width:28.5px;height:0.75px;background:#dcd8d4;"></div>
<div style="left:1.5px;top:484.97px;width:28.5px;height:0.75px;background:#dcd8d4;"></div>
<div style="left:1.5px;top:613.37px;width:28.5px;height:0.75px;background:#dcd8d4;"></div>
<div style="left:1.5px;top:741.75px;width:28.5px;height:0.75px;background:#dcd8d4;"></div>
<svg style="left:32.5px;top:134.75px;" width="20" height="20" viewBox="0 0 20 20"><path d="M6.500 9V6.500Q6.500 3.500 10 3.500T13.500 6.500V9" fill="none" stroke="#2e3436" stroke-width="2.200"/><rect x="4.500" y="8.500" width="11" height="8.500" rx="1" fill="#f0b81a" stroke="#4a3a10" stroke-width="1.500"/><path d="M5.500 11.500H14.500M5.500 14H14.500" stroke="#fbe38a" stroke-width="1"/><rect x="9" y="11" width="2" height="3.500" fill="#4a3a10"/></svg>
<div style="left:1501.25px;top:137.0px;width:413.0px;height:38.0px;background:#e1dedb;"></div>
<div style="left:1509.0px;top:138.0px;width:146.0px;height:37.0px;background:#ebe8e6;"></div>
<div style="left:1509.0px;top:170.25px;width:146.0px;height:4.0px;background:#3584e4;"></div>
<svg style="left:1518.5px;top:143.25px;" width="23" height="23" viewBox="0 0 20 20"><path d="M3 4H15L17.500 1.500L18.500 2.500L16 6V15H3Z" fill="#fff" stroke="#2e3436" stroke-width="2" stroke-linejoin="round"/><path d="M4 16L16 5V15.500H4Z" fill="#2e3436"/><path d="M15.500 3l3-2.500" stroke="#e9b913" stroke-width="2"/></svg>
<span class="t" style="left:1540.0px;top:143.0px;font-size:12px;color:#2e3436;transform:scaleX(0.716);">フィル<i>/</i>ストローク<i>(F)</i></span>
<svg style="left:1626.0px;top:144.0px;" width="20" height="20" viewBox="0 0 20 20"><path d="M6 6L14 14M14 6L6 14" stroke="#2e3436" stroke-width="1.500"/></svg>
<svg style="left:1681.0px;top:143.75px;" width="22" height="22" viewBox="0 0 20 20"><path d="M4 2V18" stroke="#e01b24" stroke-width="2.200"/><rect x="6" y="3.500" width="7" height="5" fill="#c9d6e6" stroke="#3d4a5c" stroke-width="1.500"/><rect x="6" y="11" width="11" height="5" fill="#c9d6e6" stroke="#3d4a5c" stroke-width="1.500"/></svg>
<div style="left:1884.0px;top:140.75px;width:29.75px;height:29.0px;border-radius:4px;background:#ebe8e6;border:1px solid #dad6d2"></div>
<svg style="left:1889.25px;top:145.25px;" width="20" height="20" viewBox="0 0 20 20"><path d="M4 7L10 13L16 7" fill="none" stroke="#5e5c64" stroke-width="1.700"/></svg>
<div style="left:1501.25px;top:176.5px;width:411.25px;height:28.0px;background:#e1dedb;"></div>
<div style="left:1501.25px;top:175.0px;width:411.25px;height:2.0px;background:#efedeb;"></div>
<div style="left:1590.0px;top:177.0px;width:122.0px;height:27.5px;background:#ebe8e6;"></div>
<div style="left:1590.0px;top:201.5px;width:122.0px;height:2.5px;background:#3584e4;"></div>
<svg style="left:1513.25px;top:179.0px;" width="20" height="20" viewBox="0 0 20 20"><defs><linearGradient id="tf1" x1="0" y1="0" x2="1" y2="1"><stop offset="0" stop-color="#a9c3e6"/><stop offset="1" stop-color="#e6eef8"/></linearGradient></defs><rect x="4" y="4" width="12" height="12" fill="url(#tf1)"/></svg>
<span class="t" style="left:1539.25px;top:179.75px;font-size:12px;color:#2e3436;transform:scaleX(0.643);">フィル<i>(F)</i></span>
<svg style="left:1594.5px;top:178.75px;" width="20" height="20" viewBox="0 0 20 20"><rect x="4" y="4" width="12" height="12" fill="#fff" stroke="#5e5c64" stroke-width="1.600"/></svg>
<span class="t" style="left:1617.5px;top:179.75px;font-size:12px;color:#2e3436;transform:scaleX(0.756);">ストロークの塗り<i>(P)</i></span>
<svg style="left:1725.0px;top:179.75px;" width="20" height="20" viewBox="0 0 20 20"><path d="M3 4.250H16M3 10H17M3 15.750H16" stroke="#2e3436" stroke-width="1.600"/><path d="M12.500 2.500H15.500V6H12.500Z" fill="#2e3436"/></svg>
<span class="t" style="left:1747.25px;top:179.75px;font-size:12px;color:#2e3436;transform:scaleX(0.757);">ストロークのスタイル<i>(Y)</i></span>
<div style="left:1501.25px;top:204.5px;width:411.25px;height:652.0px;background:#ffffff;border:1px solid #dcd8d4;border-top:none"></div>
<div style="left:1507.5px;top:210.0px;width:25.0px;height:23.5px;background:#fff;border:1px solid #e4e1de;border-radius:3px"></div>
<svg style="left:1510.0px;top:211.5px;" width="20" height="20" viewBox="0 0 20 20"><path d="M6.500 6.500L13.500 13.500M13.500 6.500L6.500 13.500" stroke="#2e3436" stroke-width="2.200"/></svg>
<div class="tg" style="left:1534.0px;top:207.0px;width:28.5px;height:29.5px"></div>
<svg style="left:1538.25px;top:211.5px;" width="20" height="20" viewBox="0 0 20 20"><rect x="3" y="3" width="14" height="14" fill="#8aa9d0" stroke="#3d5a80" stroke-width="1.600"/></svg>
<svg style="left:1565.75px;top:211.5px;" width="20" height="20" viewBox="0 0 20 20"><defs><linearGradient id="lg1"><stop offset="0" stop-color="#8aa9d0"/><stop offset="1" stop-color="#fff"/></linearGradient></defs><rect x="3" y="3" width="14" height="14" fill="url(#lg1)" stroke="#3d5a80" stroke-width="1.600"/></svg>
<svg style="left:1593.5px;top:211.5px;" width="20" height="20" viewBox="0 0 20 20"><defs><radialGradient id="rg1"><stop offset="0" stop-color="#8aa9d0"/><stop offset="1" stop-color="#e8eef6"/></radialGradient></defs><rect x="3" y="3" width="14" height="14" fill="url(#rg1)" stroke="#3d5a80" stroke-width="1.600"/></svg>
<svg style="left:1621.25px;top:211.5px;" width="20" height="20" viewBox="0 0 20 20"><rect x="3" y="3" width="14" height="14" fill="#fff" stroke="#3d5a80" stroke-width="1.600"/><rect x="3" y="3" width="7" height="7" fill="#8aa9d0"/><rect x="10" y="10" width="7" height="7" fill="#5f84b5"/></svg>
<svg style="left:1649.0px;top:211.5px;" width="20" height="20" viewBox="0 0 20 20"><rect x="3" y="3" width="14" height="14" fill="#fff" stroke="#3d5a80" stroke-width="1.600"/><path d="M3 7.700H17M3 12.300H17M7.700 3V17M12.300 3V17" stroke="#3d5a80" stroke-width="1.200"/></svg>
<svg style="left:1677.5px;top:211.5px;" width="20" height="20" viewBox="0 0 20 20"><rect x="3" y="3" width="14" height="14" fill="#fff" stroke="#2e3436" stroke-width="2.200"/></svg>
<span class="t" style="left:1709.75px;top:212.0px;font-size:23px;color:#111;transform:scaleX(0.857);font-weight:bold;">?</span>
<div class="tg" style="left:1853.25px;top:207.75px;width:26.75px;height:27.5px"></div>
<svg style="left:1857.0px;top:211.75px;" width="20" height="20" viewBox="0 0 20 20"><path d="M10 5.500C8.500 2 3 2 2.500 7C2 12.500 6 18 10 18C14 18 18 12.500 17.500 7C17 2 11.500 2 10 5.500Z" fill="#111"/><ellipse cx="10" cy="10.500" rx="2.500" ry="4.300" fill="#e4e0dc"/></svg>
<svg style="left:1885.25px;top:211.75px;" width="20" height="20" viewBox="0 0 20 20"><path d="M10 5.500C8.500 2 3 2 2.500 7C2 12.500 6 18 10 18C14 18 18 12.500 17.500 7C17 2 11.500 2 10 5.500Z" fill="#111"/></svg>
<span class="t" style="left:1509.25px;top:251.25px;font-size:12.5px;color:#2e3436;transform:scaleX(0.934);font-weight:700;">単一色</span>
<div class="bt" style="left:1811.0px;top:245.0px;width:95.5px;height:33.0px"></div>
<div style="left:1822.5px;top:256.0px;width:16.5px;height:11.5px;background:linear-gradient(90deg,#e01b24,#f5c211 25%,#33d17a 45%,#1c71d8 70%,#c061cb);border-radius:1.500px"></div>
<span class="t" style="left:1845.75px;top:251.75px;font-size:12px;color:#2e3436;transform:scaleX(0.860);">HSV</span>
<svg style="left:1878.75px;top:252.0px;" width="20" height="20" viewBox="0 0 20 20"><path d="M5 7.500H15L10 13Z" fill="#2e3436"/></svg>
<svg style="left:1509.25px;top:282.25px;" width="20" height="20" viewBox="0 0 20 20"><path d="M6.500 5V15L13 10Z" fill="#2e3436"/></svg>
<div style="left:1530.75px;top:283.75px;width:17px;height:17px;border-radius:50%;background:conic-gradient(#f00,#ff0,#0f0,#0ff,#00f,#f0f,#f00)"></div>
<div style="left:1535.75px;top:288.75px;width:7px;height:7px;border-radius:50%;background:#fff"></div>
<span class="t" style="left:1553.25px;top:282.75px;font-size:12px;color:#2e3436;transform:scaleX(0.726);">カラーホイール</span>
<div style="left:1527.5px;top:307.75px;width:301.0px;height:34.75px;background:linear-gradient(90deg,#f00,#ff0 16.66%,#0f0 33.33%,#0ff 50%,#00f 66.66%,#f0f 83.33%,#f00);border-radius:2px"></div>
<span class="t" style="left:1511.5px;top:315.62px;font-size:12px;color:#2e3436;transform:scaleX(0.896);">H:</span>
<div style="left:1527.5px;top:346.75px;width:301.0px;height:33.25px;background:linear-gradient(90deg,#fff,#f00);border-radius:2px"></div>
<span class="t" style="left:1511.5px;top:353.87px;font-size:12px;color:#2e3436;transform:scaleX(0.977);">S:</span>
<div style="left:1527.5px;top:383.75px;width:301.0px;height:34.0px;background:linear-gradient(90deg,#000,#ff8080);border-radius:2px"></div>
<span class="t" style="left:1511.5px;top:391.25px;font-size:12px;color:#2e3436;transform:scaleX(0.977);">V:</span>
<div style="left:1527.5px;top:422.0px;width:301.0px;height:33.5px;background:linear-gradient(90deg,rgba(255,128,128,0),rgba(255,128,128,1)),repeating-conic-gradient(#4e4e4e 0% 25%,#a2a2a2 0% 50%) 0 0/16px 16px;border-radius:2px"></div>
<span class="t" style="left:1511.5px;top:429.25px;font-size:12px;color:#2e3436;transform:scaleX(0.977);">A:</span>
<svg style="left:0;top:0" width="1920" height="1040" viewBox="0 0 1920 1040"><path d="M1673.05 346.25H1681.45L1677.25 350.55Z" fill="#fff" stroke="#222" stroke-width="1"/><path d="M1673.05 380.5H1681.45L1677.25 376.2Z" fill="#fff" stroke="#222" stroke-width="1"/><path d="M1824.3 383.25H1828.5V387.55Z" fill="#fff" stroke="#222" stroke-width="1"/><path d="M1824.3 418.25H1828.5V413.95Z" fill="#fff" stroke="#222" stroke-width="1"/><path d="M1824.3 421.5H1828.5V425.8Z" fill="#fff" stroke="#222" stroke-width="1"/><path d="M1824.3 456.0H1828.5V451.7Z" fill="#fff" stroke="#222" stroke-width="1"/></svg>
<div class="sp" style="left:1832.5px;top:308.25px;width:71.5px;height:34.0px"></div>
<div style="left:1870.25px;top:309.25px;width:0.5px;height:32.0px;background:#ebe8e5;"></div>
<div style="left:1887.0px;top:309.25px;width:0.5px;height:32.0px;background:#ebe8e5;"></div>
<svg style="left:0;top:0" width="1920" height="1040" viewBox="0 0 1920 1040"><path d="M1872.88 325.25h12" stroke="#d3d1ce" stroke-width="1.800"/><path d="M1889.12 325.25h13M1895.62 318.75v13" stroke="#2e3436" stroke-width="1.800"/></svg>
<span class="t" style="left:1841.5px;top:315.25px;font-size:13px;color:#3a3f42;transform:scaleX(0.857);">0</span>
<div class="sp" style="left:1832.5px;top:347.25px;width:71.5px;height:32.5px"></div>
<div style="left:1870.25px;top:348.25px;width:0.5px;height:30.5px;background:#ebe8e5;"></div>
<div style="left:1887.0px;top:348.25px;width:0.5px;height:30.5px;background:#ebe8e5;"></div>
<svg style="left:0;top:0" width="1920" height="1040" viewBox="0 0 1920 1040"><path d="M1872.88 363.5h12" stroke="#2e3436" stroke-width="1.800"/><path d="M1889.12 363.5h13M1895.62 357.0v13" stroke="#2e3436" stroke-width="1.800"/></svg>
<span class="t" style="left:1841.5px;top:353.5px;font-size:13px;color:#3a3f42;transform:scaleX(0.857);">50</span>
<div class="sp" style="left:1832.5px;top:384.25px;width:71.5px;height:33.25px"></div>
<div style="left:1870.25px;top:385.25px;width:0.5px;height:31.25px;background:#ebe8e5;"></div>
<div style="left:1887.0px;top:385.25px;width:0.5px;height:31.25px;background:#ebe8e5;"></div>
<svg style="left:0;top:0" width="1920" height="1040" viewBox="0 0 1920 1040"><path d="M1872.88 400.88h12" stroke="#2e3436" stroke-width="1.800"/><path d="M1889.12 400.88h13M1895.62 394.38v13" stroke="#d3d1ce" stroke-width="1.800"/></svg>
<span class="t" style="left:1841.5px;top:390.88px;font-size:13px;color:#3a3f42;transform:scaleX(0.784);">100</span>
<div class="sp" style="left:1832.5px;top:422.5px;width:71.5px;height:32.75px"></div>
<div style="left:1870.25px;top:423.5px;width:0.5px;height:30.75px;background:#ebe8e5;"></div>
<div style="left:1887.0px;top:423.5px;width:0.5px;height:30.75px;background:#ebe8e5;"></div>
<svg style="left:0;top:0" width="1920" height="1040" viewBox="0 0 1920 1040"><path d="M1872.88 438.88h12" stroke="#2e3436" stroke-width="1.800"/><path d="M1889.12 438.88h13M1895.62 432.38v13" stroke="#d3d1ce" stroke-width="1.800"/></svg>
<span class="t" style="left:1841.5px;top:428.88px;font-size:13px;color:#3a3f42;transform:scaleX(0.784);">100</span>
<svg style="left:1506.25px;top:825.0px;" width="20" height="20" viewBox="0 0 20 20"><path d="M5 3.500L16 10L5 16.500Z" fill="#f4f7fb" stroke="#b8c7dc" stroke-width="1.400"/><path d="M5 10L16 10L5 16.500Z" fill="#cfe8cf"/><path d="M5 3.500L9 10L5 10Z" fill="#f2c6d6"/></svg>
<svg style="left:1527.5px;top:825.0px;" width="20" height="20" viewBox="0 0 20 20"><circle cx="10" cy="10" r="6.500" fill="#f7b6bd" stroke="#ee99a3" stroke-width="1.500"/><circle cx="10" cy="10" r="2.500" fill="#fff"/></svg>
<svg style="left:1559.0px;top:825.0px;" width="20" height="20" viewBox="0 0 20 20"><path d="M3 17.500L4 14L10.500 7.500L13 10L6.500 16.500Z" fill="#3d3846"/><path d="M10 5.500L15 10.500M11.500 7L15.500 3Q17.500 3 17.500 5L13.500 9Z" fill="#222" stroke="#222" stroke-width="1.600"/></svg>
<span class="t" style="left:1795.0px;top:825.0px;font-size:12px;color:#2e3436;transform:scaleX(0.808);">RGBA(_):</span>
<div class="sp" style="left:1840.5px;top:818.75px;width:66.5px;height:31.5px"></div>
<span class="t" style="left:1849.0px;top:825.0px;font-size:13px;color:#2e3436;transform:scaleX(0.907);">ff8080ff</span>
<span class="t" style="left:1741.25px;top:867.5px;font-size:12px;color:#2e3436;transform:scaleX(0.710);">ブレンドモード<i>:</i></span>
<div class="bt" style="left:1804.5px;top:861.0px;width:106.0px;height:33.0px"></div>
<span class="t" style="left:1816.0px;top:867.75px;font-size:12px;color:#2e3436;transform:scaleX(0.979);">標準</span>
<svg style="left:1883.75px;top:867.75px;" width="20" height="20" viewBox="0 0 20 20"><path d="M5 7.500H15L10 13Z" fill="#2e3436"/></svg>
<div class="sp" style="left:1506.0px;top:898.5px;width:403.0px;height:31.0px;border-radius:3px"></div>
<div style="left:1506.5px;top:899.0px;width:331.5px;height:30.0px;background:#deddda;border-radius:2px 0 0 2px"></div>
<div style="left:1506.25px;top:899.0px;width:2.5px;height:30.0px;background:#3584e4;"></div>
<span class="t" style="left:1512.0px;top:904.25px;font-size:12px;color:#2e3436;transform:scaleX(0.762);">ぼかし <i>(%)</i></span>
<div class="sp" style="left:1506.0px;top:934.5px;width:403.0px;height:30.5px;border-radius:3px"></div>
<div style="left:1506.5px;top:935.0px;width:330.5px;height:29.5px;background:#3584e4;border-radius:2px 0 0 2px"></div>
<span class="t" style="left:1512.0px;top:940.0px;font-size:12px;color:#fff;transform:scaleX(0.890);">不透明度 <i>(%)</i></span>
<span class="t" style="left:1846.0px;top:904.25px;font-size:13px;color:#2e3436;transform:scaleX(0.889);">0.0</span>
<svg style="left:0;top:0" width="1920" height="1040" viewBox="0 0 1920 1040"><path d="M1877.75 914.0h12" stroke="#d3d1ce" stroke-width="1.800"/><path d="M1894.25 914.0h13M1900.75 907.5v13" stroke="#2e3436" stroke-width="1.800"/></svg>
<span class="t" style="left:1845.5px;top:940.0px;font-size:13px;color:#2e3436;transform:scaleX(0.833);">100.0</span>
<svg style="left:0;top:0" width="1920" height="1040" viewBox="0 0 1920 1040"><path d="M1877.75 949.75h12" stroke="#2e3436" stroke-width="1.800"/><path d="M1894.25 949.75h13M1900.75 943.25v13" stroke="#d3d1ce" stroke-width="1.800"/></svg>
<div style="left:1892.25px;top:900.0px;width:0.5px;height:28.5px;background:#ebe8e5;"></div>
<div style="left:1892.25px;top:935.5px;width:0.5px;height:28.5px;background:#ebe8e5;"></div>
<svg style="left:0;top:987.25px" width="1840" height="17.0" viewBox="0 0 1840 17.0"><rect x="0" y="0" width="16" height="17.0" fill="#fff"/><path d="M1 1L15 16.0M15 1L1 16.0" stroke="#8b1a1a" stroke-width="1.600"/><rect x="17.7" y="0" width="16" height="17.0" fill="#000000"/><rect x="34.7" y="0" width="16" height="17.0" fill="#1a1a1a"/><rect x="51.7" y="0" width="16" height="17.0" fill="#333333"/><rect x="68.7" y="0" width="16" height="17.0" fill="#4d4d4d"/><rect x="85.7" y="0" width="16" height="17.0" fill="#666666"/><rect x="102.7" y="0" width="16" height="17.0" fill="#808080"/><rect x="119.7" y="0" width="16" height="17.0" fill="#999999"/><rect x="136.7" y="0" width="16" height="17.0" fill="#b3b3b3"/><rect x="153.7" y="0" width="16" height="17.0" fill="#cccccc"/><rect x="170.7" y="0" width="16" height="17.0" fill="#e6e6e6"/><rect x="187.7" y="0" width="16" height="17.0" fill="#ececec"/><rect x="204.7" y="0" width="16" height="17.0" fill="#f2f2f2"/><rect x="221.7" y="0" width="16" height="17.0" fill="#f9f9f9"/><rect x="238.7" y="0" width="16" height="17.0" fill="#ffffff"/><rect x="255.7" y="0" width="16" height="17.0" fill="#800000"/><rect x="272.7" y="0" width="16" height="17.0" fill="#ff0000"/><rect x="289.7" y="0" width="16" height="17.0" fill="#808000"/><rect x="306.7" y="0" width="16" height="17.0" fill="#ffff00"/><rect x="323.7" y="0" width="16" height="17.0" fill="#008000"/><rect x="340.7" y="0" width="16" height="17.0" fill="#00ff00"/><rect x="357.7" y="0" width="16" height="17.0" fill="#008080"/><rect x="374.7" y="0" width="16" height="17.0" fill="#00ffff"/><rect x="391.7" y="0" width="16" height="17.0" fill="#000080"/><rect x="408.7" y="0" width="16" height="17.0" fill="#0000ff"/><rect x="425.7" y="0" width="16" height="17.0" fill="#800080"/><rect x="442.7" y="0" width="16" height="17.0" fill="#ff00ff"/><rect x="459.7" y="0" width="16" height="17.0" fill="#2b0000"/><rect x="476.7" y="0" width="16" height="17.0" fill="#550000"/><rect x="493.7" y="0" width="16" height="17.0" fill="#800000"/><rect x="510.7" y="0" width="16" height="17.0" fill="#aa0000"/><rect x="527.7" y="0" width="16" height="17.0" fill="#d40000"/><rect x="544.7" y="0" width="16" height="17.0" fill="#ff0000"/><rect x="561.7" y="0" width="16" height="17.0" fill="#ff2a2a"/><rect x="578.7" y="0" width="16" height="17.0" fill="#ff5555"/><rect x="595.7" y="0" width="16" height="17.0" fill="#ff8080"/><rect x="612.7" y="0" width="16" height="17.0" fill="#ffaaaa"/><rect x="629.7" y="0" width="16" height="17.0" fill="#ffd5d5"/><rect x="646.7" y="0" width="16" height="17.0" fill="#280b0b"/><rect x="663.7" y="0" width="16" height="17.0" fill="#501616"/><rect x="680.7" y="0" width="16" height="17.0" fill="#782121"/><rect x="697.7" y="0" width="16" height="17.0" fill="#a02c2c"/><rect x="714.7" y="0" width="16" height="17.0" fill="#c83737"/><rect x="731.7" y="0" width="16" height="17.0" fill="#d35f5f"/><rect x="748.7" y="0" width="16" height="17.0" fill="#de8787"/><rect x="765.7" y="0" width="16" height="17.0" fill="#e9afaf"/><rect x="782.7" y="0" width="16" height="17.0" fill="#f4d7d7"/><rect x="799.7" y="0" width="16" height="17.0" fill="#241c1c"/><rect x="816.7" y="0" width="16" height="17.0" fill="#483737"/><rect x="833.7" y="0" width="16" height="17.0" fill="#6c5353"/><rect x="850.7" y="0" width="16" height="17.0" fill="#916f6f"/><rect x="867.7" y="0" width="16" height="17.0" fill="#ac9393"/><rect x="884.7" y="0" width="16" height="17.0" fill="#c8b7b7"/><rect x="901.7" y="0" width="16" height="17.0" fill="#e3dbdb"/><rect x="918.7" y="0" width="16" height="17.0" fill="#2b1100"/><rect x="935.7" y="0" width="16" height="17.0" fill="#552200"/><rect x="952.7" y="0" width="16" height="17.0" fill="#803300"/><rect x="969.7" y="0" width="16" height="17.0" fill="#aa4400"/><rect x="986.7" y="0" width="16" height="17.0" fill="#d45500"/><rect x="1003.7" y="0" width="16" height="17.0" fill="#ff6600"/><rect x="1020.7" y="0" width="16" height="17.0" fill="#ff7f2a"/><rect x="1037.7" y="0" width="16" height="17.0" fill="#ff9955"/><rect x="1054.7" y="0" width="16" height="17.0" fill="#ffb380"/><rect x="1071.7" y="0" width="16" height="17.0" fill="#ffccaa"/><rect x="1088.7" y="0" width="16" height="17.0" fill="#ffe6d5"/><rect x="1105.7" y="0" width="16" height="17.0" fill="#28170b"/><rect x="1122.7" y="0" width="16" height="17.0" fill="#502d16"/><rect x="1139.7" y="0" width="16" height="17.0" fill="#784421"/><rect x="1156.7" y="0" width="16" height="17.0" fill="#a05a2c"/><rect x="1173.7" y="0" width="16" height="17.0" fill="#c87137"/><rect x="1190.7" y="0" width="16" height="17.0" fill="#d38d5f"/><rect x="1207.7" y="0" width="16" height="17.0" fill="#deaa87"/><rect x="1224.7" y="0" width="16" height="17.0" fill="#e9c6af"/><rect x="1241.7" y="0" width="16" height="17.0" fill="#f4e3d7"/><rect x="1258.7" y="0" width="16" height="17.0" fill="#241f1c"/><rect x="1275.7" y="0" width="16" height="17.0" fill="#483e37"/><rect x="1292.7" y="0" width="16" height="17.0" fill="#6c5d53"/><rect x="1309.7" y="0" width="16" height="17.0" fill="#917c6f"/><rect x="1326.7" y="0" width="16" height="17.0" fill="#ac9d93"/><rect x="1343.7" y="0" width="16" height="17.0" fill="#c8beb7"/><rect x="1360.7" y="0" width="16" height="17.0" fill="#e3dedb"/><rect x="1377.7" y="0" width="16" height="17.0" fill="#2b2200"/><rect x="1394.7" y="0" width="16" height="17.0" fill="#554400"/><rect x="1411.7" y="0" width="16" height="17.0" fill="#806600"/><rect x="1428.7" y="0" width="16" height="17.0" fill="#aa8800"/><rect x="1445.7" y="0" width="16" height="17.0" fill="#d4aa00"/><rect x="1462.7" y="0" width="16" height="17.0" fill="#ffcc00"/><rect x="1479.7" y="0" width="16" height="17.0" fill="#ffd42a"/><rect x="1496.7" y="0" width="16" height="17.0" fill="#ffdd55"/><rect x="1513.7" y="0" width="16" height="17.0" fill="#ffe680"/><rect x="1530.7" y="0" width="16" height="17.0" fill="#ffeeaa"/><rect x="1547.7" y="0" width="16" height="17.0" fill="#fff6d5"/><rect x="1564.7" y="0" width="16" height="17.0" fill="#28220b"/><rect x="1581.7" y="0" width="16" height="17.0" fill="#504416"/><rect x="1598.7" y="0" width="16" height="17.0" fill="#786721"/><rect x="1615.7" y="0" width="16" height="17.0" fill="#a0892c"/><rect x="1632.7" y="0" width="16" height="17.0" fill="#c8ab37"/><rect x="1649.7" y="0" width="16" height="17.0" fill="#d3bc5f"/><rect x="1666.7" y="0" width="16" height="17.0" fill="#decd87"/><rect x="1683.7" y="0" width="16" height="17.0" fill="#e9ddaf"/><rect x="1700.7" y="0" width="16" height="17.0" fill="#f4eed7"/><rect x="1717.7" y="0" width="16" height="17.0" fill="#24221c"/><rect x="1734.7" y="0" width="16" height="17.0" fill="#484537"/><rect x="1751.7" y="0" width="16" height="17.0" fill="#6c6753"/><rect x="1768.7" y="0" width="16" height="17.0" fill="#918a6f"/><rect x="1785.7" y="0" width="16" height="17.0" fill="#aca793"/><rect x="1802.7" y="0" width="16" height="17.0" fill="#c8c4b7"/><rect x="1819.7" y="0" width="16" height="17.0" fill="#e3e2db"/></svg>
<svg style="left:1842.0px;top:981.25px;" width="20" height="20" viewBox="0 0 20 20"><path d="M3 13.500L10 6.500L17 13.500" fill="none" stroke="#2e3436" stroke-width="2.500"/></svg>
<svg style="left:1873.0px;top:981.25px;" width="20" height="20" viewBox="0 0 20 20"><path d="M3 6.500L10 13.500L17 6.500" fill="none" stroke="#2e3436" stroke-width="2.500"/></svg>
<div class="bt" style="left:1900.5px;top:977.25px;width:21.0px;height:26.25px"></div>
<svg style="left:1900.0px;top:980.25px;" width="20" height="20" viewBox="0 0 20 20"><path d="M4.500 4.300H15.500M4.500 10H15.500M4.500 15.700H15.500" stroke="#2e3436" stroke-width="1.900"/></svg>
<span class="t" style="left:20.25px;top:1005.5px;font-size:12px;color:#2e3436;transform:scaleX(0.662);">フィル<i>:</i></span>
<span class="t" style="left:2.5px;top:1022.0px;font-size:12px;color:#2e3436;transform:scaleX(0.691);">ストローク<i>:</i></span>
<div style="left:64.0px;top:1007.0px;width:49.25px;height:14.25px;background:#ffd5d5;"></div>
<div style="left:64.0px;top:1023.5px;width:49.25px;height:14.75px;background:#ff8080;"></div>
<span class="t" style="left:128.25px;top:1021.5px;font-size:13px;color:#2e3436;transform:scaleX(0.780);">13.2</span>
<span class="t" style="left:157.75px;top:1013.0px;font-size:12px;color:#2e3436;transform:scaleX(0.846);">O:</span>
<div class="sp" style="left:171.75px;top:1005.75px;width:71.25px;height:36.75px"></div>
<div style="left:209.25px;top:1006.75px;width:0.5px;height:34.75px;background:#ebe8e5;"></div>
<div style="left:226.0px;top:1006.75px;width:0.5px;height:34.75px;background:#ebe8e5;"></div>
<svg style="left:0;top:0" width="1920" height="1040" viewBox="0 0 1920 1040"><path d="M211.88 1022.75h12" stroke="#2e3436" stroke-width="1.800"/><path d="M228.12 1022.75h13M234.62 1016.25v13" stroke="#d3d1ce" stroke-width="1.800"/></svg>
<span class="t" style="left:179.5px;top:1012.75px;font-size:13px;color:#3a3f42;transform:scaleX(0.784);">100</span>
<div style="left:260.5px;top:1012.5px;width:2.5px;height:20.0px;background:#6f9fe0;"></div>
<span class="t" style="left:270.0px;top:1012.25px;font-size:12px;color:#4a4f52;transform:scaleX(0.873);">黄<i>(yellow)</i></span>
<svg style="left:342.0px;top:1012.5px;" width="20" height="20" viewBox="0 0 20 20"><path d="M1 10Q10 1.500 19 10Q10 18.500 1 10Z" fill="#2e3436"/><circle cx="10" cy="10" r="3.600" fill="#c0bfbc"/><circle cx="10" cy="10" r="2" fill="#2e3436"/></svg>
<svg style="left:377.5px;top:1012.5px;" width="20" height="20" viewBox="0 0 20 20"><path d="M4.500 9.500V6.500Q4.500 3 8 3T11.500 6" fill="none" stroke="#3d3846" stroke-width="1.800"/><rect x="6" y="9" width="10.500" height="8.500" rx="1" fill="#f5e6a8" stroke="#3d3846" stroke-width="1.400"/><path d="M7.500 12H15M7.500 14.500H15" stroke="#d9b64a" stroke-width="1"/></svg>
<div style="left:406.0px;top:1010.0px;width:0.75px;height:26.0px;background:#dcd8d4;"></div>
<span class="t" style="left:413.75px;top:1012.0px;font-size:12px;color:#2e3436;transform:scaleX(0.791);"><b style="font-weight:600">パス</b> <i>4</i> ノード 所属<i>:</i> レイヤー <b style="font-weight:600">黄<i>(yellow)</i></b><i>.</i></span>
<span class="t" style="left:602.5px;top:1012.0px;font-size:12px;color:#2e3436;transform:scaleX(0.775);">選択オブジェクトのクリックで拡大<i>/</i>縮小ハンドル<i>/</i>回転ハンドルが切り替わります。</span>
<span class="t" style="left:1626.5px;top:1004.0px;font-size:12px;color:#77767b;transform:scaleX(0.886);">X:</span>
<span class="t" style="left:1626.5px;top:1021.5px;font-size:12px;color:#77767b;transform:scaleX(0.886);">Y:</span>
<span class="t" style="left:1647.0px;top:1004.0px;font-size:13px;color:#4a4f52;transform:scaleX(0.835);">1692.78</span>
<span class="t" style="left:1647.0px;top:1021.5px;font-size:13px;color:#4a4f52;transform:scaleX(0.835);">2041.51</span>
<span class="t" style="left:1696.5px;top:1013.0px;font-size:12px;color:#5e5c64;transform:scaleX(0.773);">Z:</span>
<div class="sp" style="left:1706.5px;top:1006.5px;width:86.0px;height:36.0px"></div>
<div style="left:1749.25px;top:1007.5px;width:0.5px;height:34.0px;background:#ebe8e5;"></div>
<div style="left:1770.75px;top:1007.5px;width:0.5px;height:34.0px;background:#ebe8e5;"></div>
<svg style="left:0;top:0" width="1920" height="1040" viewBox="0 0 1920 1040"><path d="M1754.25 1023.0h12" stroke="#2e3436" stroke-width="1.800"/><path d="M1775.25 1023.0h13M1781.75 1016.5v13" stroke="#2e3436" stroke-width="1.800"/></svg>
<span class="t" style="left:1716.5px;top:1013.0px;font-size:13px;color:#3a3f42;transform:scaleX(0.712);">18%</span>
<span class="t" style="left:1804.5px;top:1013.0px;font-size:12px;color:#5e5c64;transform:scaleX(0.750);">R:</span>
<div class="sp" style="left:1814.5px;top:1006.5px;width:93.5px;height:36.0px"></div>
<div style="left:1866.75px;top:1007.5px;width:0.5px;height:34.0px;background:#ebe8e5;"></div>
<div style="left:1887.25px;top:1007.5px;width:0.5px;height:34.0px;background:#ebe8e5;"></div>
<svg style="left:0;top:0" width="1920" height="1040" viewBox="0 0 1920 1040"><path d="M1871.25 1023.0h12" stroke="#2e3436" stroke-width="1.800"/><path d="M1891.25 1023.0h13M1897.75 1016.5v13" stroke="#2e3436" stroke-width="1.800"/></svg>
<span class="t" style="left:1825.5px;top:1013.0px;font-size:13px;color:#3a3f42;transform:scaleX(0.855);">0.00°</span>
</div></body></html>
